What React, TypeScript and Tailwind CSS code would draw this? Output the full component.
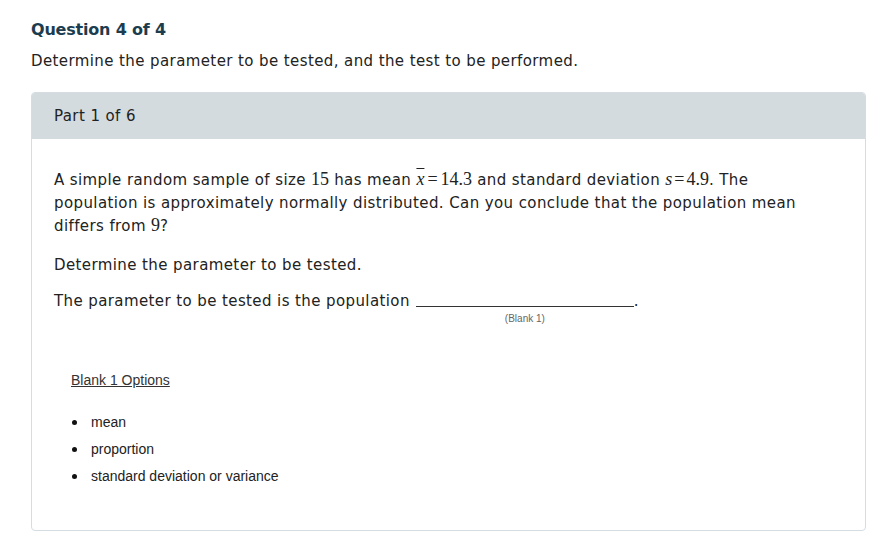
import React from "react";

const verdana = { fontFamily: '"DejaVu Sans", Verdana, sans-serif' };

function M({ children }: { children: React.ReactNode }) {
  return (
    <span
      className="text-[18px] leading-[0] tracking-normal"
      style={{ fontFamily: '"Liberation Serif", "Times New Roman", serif' }}
    >
      {children}
    </span>
  );
}

function Bullet({ children, first }: { children: React.ReactNode; first?: boolean }) {
  return (
    <li className={first ? "flex items-center h-[18px]" : "flex items-center h-[18px] mt-[9px]"}>
      <span className="block w-[5px] h-[5px] rounded-full bg-[#111] ml-[1px] mr-[14px]"></span>
      {children}
    </li>
  );
}

export default function App() {
  return (
    <div className="w-[896px] h-[546px] bg-white text-[#222] overflow-hidden" style={verdana}>
      <div className="pl-[31px] pr-[30px] pt-[19px]">
        <h1 className="text-[16px] font-bold text-[#1c3d4f] leading-[22px] tracking-[-0.2px]">Question 4 of 4</h1>
        <p className="mt-[9px] text-[15px] leading-[22px] tracking-[0.4px]">
          Determine the parameter to be tested, and the test to be performed.
        </p>
        <div className="mt-[20px] border border-[#d5dde2] rounded-[4px] h-[439px] overflow-hidden">
          <div className="bg-[#d3dbdf] h-[46px] flex items-center px-[22px] text-[15px] tracking-[0.4px]">Part 1 of 6</div>
          <div className="px-[22px] pt-[30px] tracking-[0.4px]">
            <p className="text-[15px] leading-[23px] w-[775px]">
              A simple random sample of size <M>15</M> has mean{" "}
              <M>
                <span className="italic" style={{ textDecoration: "overline" }}>x</span>
                <span className="mx-[3px]">=</span>14.3
              </M>{" "}
              and standard deviation{" "}
              <M>
                <span className="italic">s</span>
                <span className="mx-[2px]">=</span>4.9
              </M>
              . The population is approximately normally distributed. Can you conclude that the population mean differs
              from <M>9</M>?
            </p>
            <p className="mt-[16px] text-[15px] leading-[23px]">Determine the parameter to be tested.</p>
            <div className="mt-[13px] flex items-start text-[15px] leading-[23px]">
              <span>The parameter to be tested is the population</span>
              <span className="ml-[6px] flex flex-col items-center w-[218px]">
                <span className="block w-full h-[17px] border-b border-[#333]"></span>
                <span
                  className="text-[10px] leading-[14px] mt-[5px] text-[#666] tracking-normal"
                  style={{ fontFamily: '"Liberation Sans", Arial, sans-serif' }}
                >
                  (Blank 1)
                </span>
              </span>
              <span>.</span>
            </div>
            <div
              className="pl-[17px] mt-[45px] tracking-normal"
              style={{ fontFamily: '"Liberation Sans", Arial, sans-serif' }}
            >
              <div className="text-[14px] leading-[18px] underline text-[#333]">Blank 1 Options</div>
              <ul className="mt-[24px] text-[14px] leading-[18px] text-[#222]">
                <Bullet first>mean</Bullet>
                <Bullet>proportion</Bullet>
                <Bullet>standard deviation or variance</Bullet>
              </ul>
            </div>
          </div>
        </div>
      </div>
    </div>
  );
}
